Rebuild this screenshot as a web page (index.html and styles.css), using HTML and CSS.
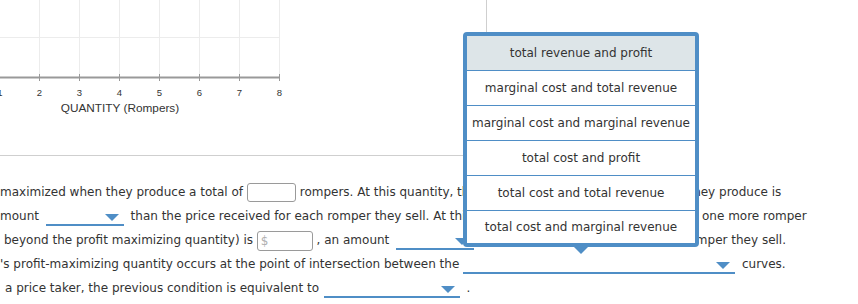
FILE: index.html
```html
<!DOCTYPE html>
<html>
<head>
<meta charset="utf-8">
<link rel="stylesheet" href="styles.css">
</head>
<body>
<div class="page">
  <div class="graph-box">
    <svg class="graph" width="486" height="155" viewBox="0 0 486 155">
      <g stroke="#ececec" stroke-width="1">
        <line x1="0" y1="37.5" x2="279" y2="37.5"/>
        <line x1="39.5" y1="0" x2="39.5" y2="77"/>
        <line x1="79.5" y1="0" x2="79.5" y2="77"/>
        <line x1="119.5" y1="0" x2="119.5" y2="77"/>
        <line x1="159.5" y1="0" x2="159.5" y2="77"/>
        <line x1="199.5" y1="0" x2="199.5" y2="77"/>
        <line x1="239.5" y1="0" x2="239.5" y2="77"/>
        <line x1="279.5" y1="0" x2="279.5" y2="77"/>
      </g>
      <line x1="0" y1="77.5" x2="280" y2="77.5" stroke="#999" stroke-width="2"/>
      <g stroke="#999" stroke-width="1">
        <line x1="39.5" y1="74" x2="39.5" y2="81"/>
        <line x1="79.5" y1="74" x2="79.5" y2="81"/>
        <line x1="119.5" y1="74" x2="119.5" y2="81"/>
        <line x1="159.5" y1="74" x2="159.5" y2="81"/>
        <line x1="199.5" y1="74" x2="199.5" y2="81"/>
        <line x1="239.5" y1="74" x2="239.5" y2="81"/>
        <line x1="279.5" y1="74" x2="279.5" y2="81"/>
      </g>
      <g class="tick" text-anchor="middle">
        <text x="0" y="96">1</text>
        <text x="39.5" y="96">2</text>
        <text x="79.5" y="96">3</text>
        <text x="119.5" y="96">4</text>
        <text x="159.5" y="96">5</text>
        <text x="199.5" y="96">6</text>
        <text x="239.5" y="96">7</text>
        <text x="279.5" y="96">8</text>
      </g>
      <text class="axis-title" x="120" y="112" text-anchor="middle">QUANTITY (Rompers)</text>
    </svg>
  </div>

  <div class="text-block">
    <div class="row">maximized when they produce a total of <span class="input"></span> rompers. At this quantity, the marginal costs of the final romper they produce is</div>
    <div class="row">mount <span class="dropdown short"></span> than the price received for each romper they sell. At this quantity, the total costs of producing one more romper</div>
    <div class="row row-3">beyond the profit maximizing quantity) is <span class="input money">$</span> , an amount <span class="dropdown short"></span> than the prices received for each romper they sell.</div>
    <div class="row">'s profit-maximizing quantity occurs at the point of intersection between the <span class="dropdown long"></span> curves.</div>
    <div class="row row-5">a price taker, the previous condition is equivalent to <span class="dropdown mid"></span> .</div>
  </div>

  <div class="popup">
    <ul class="options">
      <li class="option active">total revenue and profit</li>
      <li class="option">marginal cost and total revenue</li>
      <li class="option">marginal cost and marginal revenue</li>
      <li class="option">total cost and profit</li>
      <li class="option">total cost and total revenue</li>
      <li class="option">total cost and marginal revenue</li>
    </ul>
    <span class="popup-arrow"></span>
  </div>
</div>
</body>
</html>
```

FILE: styles.css
```css
html, body {
  margin: 0;
  padding: 0;
  background: #fff;
}

body {
  width: 858px;
  height: 304px;
  overflow: hidden;
  font-family: "DejaVu Sans", Verdana, sans-serif;
  color: #333;
}

.page {
  position: relative;
  width: 858px;
  height: 304px;
}

.graph-box {
  width: 486px;
  height: 155px;
  border-right: 1px solid #cfcfcf;
  border-bottom: 1px solid #cfcfcf;
}

.graph {
  display: block;
}

.tick {
  font-family: "Liberation Sans", Arial, sans-serif;
  font-size: 9.5px;
  fill: #333;
}

.axis-title {
  font-family: "Liberation Sans", Arial, sans-serif;
  font-size: 11.8px;
  fill: #333;
}

.text-block {
  padding-top: 24px;
  font-size: 12px;
}

.row {
  height: 24px;
  line-height: 24px;
  white-space: nowrap;
}

.row-3 {
  padding-left: 4px;
}

.row-5 {
  padding-left: 5px;
}

.input {
  display: inline-block;
  width: 47px;
  height: 17px;
  border: 1px solid #9a9a9a;
  border-radius: 3px;
  vertical-align: middle;
  box-sizing: content-box;
  line-height: 17px;
}

.input.money {
  color: #b0b0b0;
  padding-left: 3px;
  box-sizing: border-box;
  width: 56px;
  height: 20px;
  line-height: 18px;
}

.dropdown {
  display: inline-block;
  position: relative;
  height: 16px;
  border-bottom: 2px solid #4f8ec6;
  vertical-align: middle;
  margin: 0 3px;
}

.dropdown::after {
  content: "";
  position: absolute;
  right: 5px;
  top: 6px;
  border-left: 7px solid transparent;
  border-right: 7px solid transparent;
  border-top: 7px solid #4f8ec6;
}

.dropdown.short { width: 78px; }
.dropdown.long { width: 272px; margin-left: 0; }
.dropdown.mid { width: 136px; margin-left: 1px; }

.popup {
  position: absolute;
  left: 463px;
  top: 32px;
  width: 236px;
  box-sizing: border-box;
  border: 4px solid #4f8ec6;
  border-radius: 4px;
  background: #fff;
}

.options {
  list-style: none;
  margin: 0;
  padding: 0;
}

.option {
  height: 34px;
  line-height: 34px;
  text-align: center;
  font-size: 12px;
  color: #333;
  border-top: 1px solid #4f8ec6;
  white-space: nowrap;
}

.option:first-child {
  border-top: none;
}

.option:last-child {
  height: 32px;
  line-height: 32px;
}

.option.active {
  background: #dde5e8;
}

.popup-arrow {
  position: absolute;
  left: 107px;
  bottom: -11px;
  border-left: 7px solid transparent;
  border-right: 7px solid transparent;
  border-top: 7px solid #4f8ec6;
}
```
